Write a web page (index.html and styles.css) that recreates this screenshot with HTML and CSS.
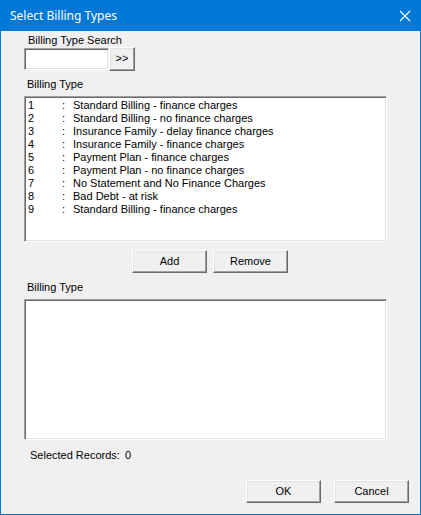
FILE: index.html
```html
<!DOCTYPE html>
<html>
<head>
<meta charset="utf-8">
<link rel="stylesheet" href="styles.css">
</head>
<body>
<div class="window">
  <div class="titlebar">
    <span class="title">Select Billing Types</span>
    <svg class="close" width="12" height="12" viewBox="0 0 12 12"><path d="M1 1 L11 11 M11 1 L1 11" stroke="#fff" stroke-width="1.1" fill="none"/></svg>
  </div>
  <div class="content">
    <div class="label search-label">Billing Type Search</div>
    <div class="search-row">
      <div class="search-input"></div>
      <div class="btn btn-go">&gt;&gt;</div>
    </div>
    <div class="label list-label">Billing Type</div>
    <div class="listbox list1">
      <div class="row"><span class="num">1</span><span class="colon">:</span><span>Standard Billing - finance charges</span></div>
      <div class="row"><span class="num">2</span><span class="colon">:</span><span>Standard Billing - no finance charges</span></div>
      <div class="row"><span class="num">3</span><span class="colon">:</span><span>Insurance Family - delay finance charges</span></div>
      <div class="row"><span class="num">4</span><span class="colon">:</span><span>Insurance Family - finance charges</span></div>
      <div class="row"><span class="num">5</span><span class="colon">:</span><span>Payment Plan - finance charges</span></div>
      <div class="row"><span class="num">6</span><span class="colon">:</span><span>Payment Plan - no finance charges</span></div>
      <div class="row"><span class="num">7</span><span class="colon">:</span><span>No Statement and No Finance Charges</span></div>
      <div class="row"><span class="num">8</span><span class="colon">:</span><span>Bad Debt - at risk</span></div>
      <div class="row"><span class="num">9</span><span class="colon">:</span><span>Standard Billing - finance charges</span></div>
    </div>
    <div class="mid-buttons">
      <div class="btn btn-wide">Add</div>
      <div class="btn btn-wide">Remove</div>
    </div>
    <div class="label list-label2">Billing Type</div>
    <div class="listbox list2"></div>
    <div class="status"><span class="status-label">Selected Records:</span><span>0</span></div>
    <div class="footer">
      <div class="btn btn-wide">OK</div>
      <div class="btn btn-wide">Cancel</div>
    </div>
  </div>
</div>
</body>
</html>
```

FILE: styles.css
```css
html, body {
  margin: 0;
  padding: 0;
  background: #f0f0f0;
}
.window {
  width: 421px;
  height: 515px;
  box-sizing: border-box;
  border: 1px solid #0078d7;
  border-top: none;
  background: #f0f0f0;
  font-family: "Liberation Sans", Arial, sans-serif;
  font-size: 11px;
  color: #000;
  overflow: hidden;
}
.titlebar {
  height: 31px;
  margin: 0 -1px;
  background: #0078d7;
  display: flex;
  align-items: center;
  justify-content: space-between;
  padding: 0 10px 0 10px;
  box-sizing: border-box;
}
.title {
  color: #fff;
  font-family: "Noto Sans", "Open Sans", sans-serif;
  font-size: 12px;
  line-height: 16px;
  margin-top: 1px;
}
.close {
  display: block;
}
.content {
  padding-left: 23px;
  display: flex;
  flex-direction: column;
  align-items: flex-start;
}
.label {
  line-height: 13px;
  height: 13px;
  margin-left: 4px;
}
.search-label {
  margin-top: 3px;
}
.search-row {
  display: flex;
  align-items: center;
  height: 24px;
}
.search-input {
  box-sizing: border-box;
  width: 85px;
  height: 22px;
  background: #fff;
  border: 1px solid;
  border-color: #a0a0a0 #fff #fff #a0a0a0;
  box-shadow: inset 1px 1px #696969, inset -1px -1px #e3e3e3;
}
.btn {
  box-sizing: border-box;
  border: 1px solid;
  border-color: #fff #696969 #696969 #fff;
  box-shadow: inset -1px -1px #a0a0a0, inset 1px 1px #e3e3e3;
  background: #f0f0f0;
  display: flex;
  align-items: center;
  justify-content: center;
  line-height: 13px;
}
.btn-go {
  width: 26px;
  height: 24px;
  padding-bottom: 1px;
}
.list-label {
  margin-top: 7px;
  margin-left: 3px;
}
.listbox {
  box-sizing: border-box;
  width: 363px;
  background: #fff;
  border: 1px solid;
  border-color: #a0a0a0 #fff #fff #a0a0a0;
  box-shadow: inset 1px 1px #696969, inset -1px -1px #e3e3e3;
  padding: 2px 2px 2px 3px;
}
.list1 {
  height: 146px;
  margin-top: 5px;
}
.row {
  display: flex;
  height: 13px;
  line-height: 13px;
  white-space: nowrap;
}
.num {
  width: 34px;
}
.colon {
  width: 11px;
}
.mid-buttons {
  display: flex;
  gap: 6px;
  margin-top: 8px;
  margin-left: 108px;
}
.btn-wide {
  width: 75px;
  height: 23px;
}
.list-label2 {
  margin-top: 8px;
  margin-left: 3px;
}
.list2 {
  height: 141px;
  margin-top: 5px;
}
.status {
  display: flex;
  margin-top: 9px;
  margin-left: 6px;
  line-height: 13px;
}
.status-label {
  width: 95px;
}
.footer {
  display: flex;
  gap: 13px;
  margin-top: 18px;
  margin-left: 222px;
}
```
